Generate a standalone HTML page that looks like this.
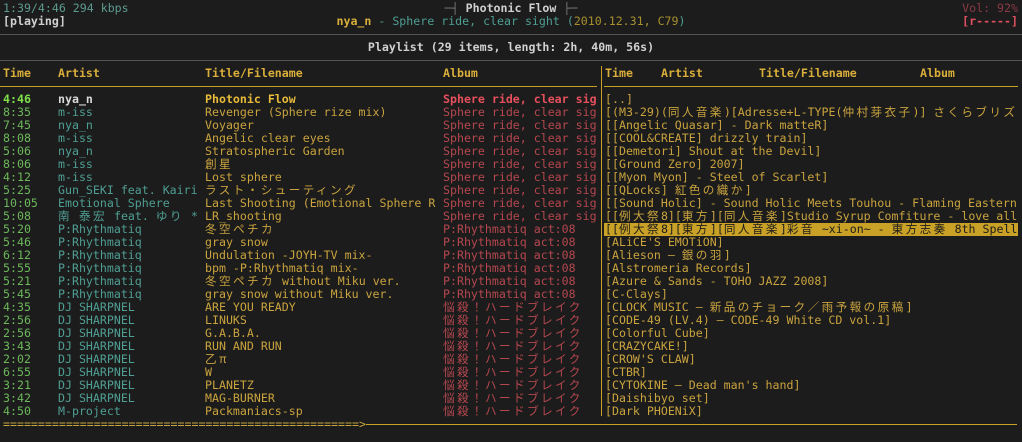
<!DOCTYPE html>
<html><head><meta charset="utf-8">
<style>
html,body{margin:0;padding:0;background:#1c1c1c;width:1022px;height:442px;overflow:hidden}
body{position:relative;font-family:"DejaVu Sans Mono","Liberation Mono","Noto Sans CJK JP",monospace;font-size:11.6px;line-height:13px}
.r{position:absolute;left:0;width:1022px;height:13px}
.c{position:absolute;top:0;white-space:pre;overflow:hidden;height:13px}
.b{font-weight:bold}
i{font-style:normal;letter-spacing:2.4px;font-family:"Noto Sans CJK JP",sans-serif}
.hl{position:absolute;background:#c9a126}
.h{color:#d9ae3a;font-weight:bold}
.line{position:absolute;height:1px}
.t1{left:3px;color:#6cb85a}
.t2{left:58px;width:145px;color:#4f9e93}
.t3{left:205px;width:236px;color:#c9a33e}
.t4{left:443px;width:155px;color:#b5474f}
.t5{left:605px;width:413px;color:#c9a33e}
</style></head><body>
<div class="r" style="top:2px"><span class="c" style="left:3px;color:#5d9a8e">1:39/4:46 294 kbps</span>
<span class="c" style="left:0;width:1022px;text-align:center;color:#d0d0d0"><span style="color:#777">─┤ </span><b>Photonic Flow</b><span style="color:#777"> ├─</span></span>
<span class="c" style="right:4px;color:#8a3a45">Vol: 92%</span></div>
<div class="r" style="top:15px"><span class="c b" style="left:3px;color:#d0d0d0">[playing]</span>
<span class="c" style="left:0;width:1022px;text-align:center;color:#4f9e93"><b style="color:#d9ae3a">nya_n</b> - Sphere ride, clear sight (<span style="color:#a8902e">2010.12.31, C79</span>)</span>
<span class="c b" style="right:4px;color:#e05060">[r-----]</span></div>
<div class="line" style="top:34px;left:0;width:1022px;background:#555"></div>
<div class="r" style="top:41px"><span class="c b" style="left:0;width:1022px;text-align:center;color:#d0d0d0">Playlist (29 items, length: 2h, 40m, 56s)</span></div>
<div class="line" style="top:60px;left:0;width:1022px;background:#555"></div>
<div class="r" style="top:67px"><span class="c h" style="left:3px">Time</span><span class="c h" style="left:58px">Artist</span><span class="c h" style="left:205px">Title/Filename</span><span class="c h" style="left:443px">Album</span>
<span class="c h" style="left:605px">Time</span><span class="c h" style="left:661px">Artist</span><span class="c h" style="left:759px">Title/Filename</span><span class="c h" style="left:920px">Album</span></div>
<div class="line" style="top:86px;left:0;width:597px;background:#c9a126"></div>
<div class="line" style="top:86px;left:604px;width:414px;background:#c9a126"></div>
<div class="line" style="top:66px;left:601px;width:1px;height:350px;background:#c9a126"></div>
<div class="hl" style="left:604px;top:223px;width:414px;height:13px"></div>

<div class="r" style="top:93px"><span class="c t1 b" style="color:#7fe04a">4:46</span><span class="c t2 b" style="color:#d8d8d8">nya_n</span><span class="c t3 b" style="color:#e8bb3a">Photonic Flow</span><span class="c t4 b" style="color:#e5505c">Sphere ride, clear sig</span><span class="c t5">[..]</span></div>
<div class="r" style="top:106px"><span class="c t1">8:35</span><span class="c t2">m-iss</span><span class="c t3">Revenger (Sphere rize mix)</span><span class="c t4">Sphere ride, clear sig</span><span class="c t5">[(M3-29)(<i>同人音楽</i>)[Adresse+L-TYPE(<i>仲村芽衣子</i>)] <i>さくらブリズ</i></span></div>
<div class="r" style="top:119px"><span class="c t1">7:45</span><span class="c t2">nya_n</span><span class="c t3">Voyager</span><span class="c t4">Sphere ride, clear sig</span><span class="c t5">[[Angelic Quasar] - Dark matteR]</span></div>
<div class="r" style="top:132px"><span class="c t1">8:08</span><span class="c t2">m-iss</span><span class="c t3">Angelic clear eyes</span><span class="c t4">Sphere ride, clear sig</span><span class="c t5">[[COOL&amp;CREATE] drizzly train]</span></div>
<div class="r" style="top:145px"><span class="c t1">5:06</span><span class="c t2">nya_n</span><span class="c t3">Stratospheric Garden</span><span class="c t4">Sphere ride, clear sig</span><span class="c t5">[[Demetori] Shout at the Devil]</span></div>
<div class="r" style="top:158px"><span class="c t1">8:06</span><span class="c t2">m-iss</span><span class="c t3"><i>創星</i></span><span class="c t4">Sphere ride, clear sig</span><span class="c t5">[[Ground Zero] 2007]</span></div>
<div class="r" style="top:171px"><span class="c t1">4:12</span><span class="c t2">m-iss</span><span class="c t3">Lost sphere</span><span class="c t4">Sphere ride, clear sig</span><span class="c t5">[[Myon Myon] - Steel of Scarlet]</span></div>
<div class="r" style="top:184px"><span class="c t1">5:25</span><span class="c t2">Gun_SEKI feat. Kairi</span><span class="c t3"><i>ラスト・シューティング</i></span><span class="c t4">Sphere ride, clear sig</span><span class="c t5">[[QLocks] <i>紅色の織か</i>]</span></div>
<div class="r" style="top:197px"><span class="c t1">10:05</span><span class="c t2">Emotional Sphere</span><span class="c t3">Last Shooting (Emotional Sphere R</span><span class="c t4">Sphere ride, clear sig</span><span class="c t5">[[Sound Holic] - Sound Holic Meets Touhou - Flaming Eastern</span></div>
<div class="r" style="top:210px"><span class="c t1">5:08</span><span class="c t2"><i>南</i> <i>泰宏</i> feat. <i>ゆり</i> *</span><span class="c t3">LR_shooting</span><span class="c t4">Sphere ride, clear sig</span><span class="c t5">[[<i>例大祭</i>8][<i>東方</i>][<i>同人音楽</i>]Studio Syrup Comfiture - love all</span></div>
<div class="r" style="top:223px"><span class="c t1">5:20</span><span class="c t2">P:Rhythmatiq</span><span class="c t3"><i>冬空ペチカ</i></span><span class="c t4">P:Rhythmatiq act:08</span><span class="c t5" style="color:#1c1c1c">[[<i>例大祭</i>8][<i>東方</i>][<i>同人音楽</i>]<i>彩音</i> ~xi-on~ - <i>東方志奏</i> 8th Spell</span></div>
<div class="r" style="top:236px"><span class="c t1">5:46</span><span class="c t2">P:Rhythmatiq</span><span class="c t3">gray snow</span><span class="c t4">P:Rhythmatiq act:08</span><span class="c t5">[ALiCE'S EMOTiON]</span></div>
<div class="r" style="top:249px"><span class="c t1">6:12</span><span class="c t2">P:Rhythmatiq</span><span class="c t3">Undulation -JOYH-TV mix-</span><span class="c t4">P:Rhythmatiq act:08</span><span class="c t5">[Alieson — <i>銀の羽</i>]</span></div>
<div class="r" style="top:262px"><span class="c t1">5:55</span><span class="c t2">P:Rhythmatiq</span><span class="c t3">bpm -P:Rhythmatiq mix-</span><span class="c t4">P:Rhythmatiq act:08</span><span class="c t5">[Alstromeria Records]</span></div>
<div class="r" style="top:275px"><span class="c t1">5:21</span><span class="c t2">P:Rhythmatiq</span><span class="c t3"><i>冬空ペチカ</i> without Miku ver.</span><span class="c t4">P:Rhythmatiq act:08</span><span class="c t5">[Azure &amp; Sands - TOHO JAZZ 2008]</span></div>
<div class="r" style="top:288px"><span class="c t1">5:45</span><span class="c t2">P:Rhythmatiq</span><span class="c t3">gray snow without Miku ver.</span><span class="c t4">P:Rhythmatiq act:08</span><span class="c t5">[C-Clays]</span></div>
<div class="r" style="top:301px"><span class="c t1">4:35</span><span class="c t2">DJ SHARPNEL</span><span class="c t3">ARE YOU READY</span><span class="c t4"><i>悩殺！ハードブレイク</i></span><span class="c t5">[CLOCK MUSIC — <i>新品のチョーク／雨予報の原稿</i>]</span></div>
<div class="r" style="top:314px"><span class="c t1">2:56</span><span class="c t2">DJ SHARPNEL</span><span class="c t3">LINUKS</span><span class="c t4"><i>悩殺！ハードブレイク</i></span><span class="c t5">[CODE-49 (LV.4) — CODE-49 White CD vol.1]</span></div>
<div class="r" style="top:327px"><span class="c t1">2:56</span><span class="c t2">DJ SHARPNEL</span><span class="c t3">G.A.B.A.</span><span class="c t4"><i>悩殺！ハードブレイク</i></span><span class="c t5">[Colorful Cube]</span></div>
<div class="r" style="top:340px"><span class="c t1">3:43</span><span class="c t2">DJ SHARPNEL</span><span class="c t3">RUN AND RUN</span><span class="c t4"><i>悩殺！ハードブレイク</i></span><span class="c t5">[CRAZYCAKE!]</span></div>
<div class="r" style="top:353px"><span class="c t1">2:02</span><span class="c t2">DJ SHARPNEL</span><span class="c t3"><i>乙π</i></span><span class="c t4"><i>悩殺！ハードブレイク</i></span><span class="c t5">[CROW'S CLAW]</span></div>
<div class="r" style="top:366px"><span class="c t1">6:55</span><span class="c t2">DJ SHARPNEL</span><span class="c t3">W</span><span class="c t4"><i>悩殺！ハードブレイク</i></span><span class="c t5">[CTBR]</span></div>
<div class="r" style="top:379px"><span class="c t1">3:21</span><span class="c t2">DJ SHARPNEL</span><span class="c t3">PLANETZ</span><span class="c t4"><i>悩殺！ハードブレイク</i></span><span class="c t5">[CYTOKINE — Dead man's hand]</span></div>
<div class="r" style="top:392px"><span class="c t1">3:42</span><span class="c t2">DJ SHARPNEL</span><span class="c t3">MAG-BURNER</span><span class="c t4"><i>悩殺！ハードブレイク</i></span><span class="c t5">[Daishibyo set]</span></div>
<div class="r" style="top:405px"><span class="c t1">4:50</span><span class="c t2">M-project</span><span class="c t3">Packmaniacs-sp</span><span class="c t4"><i>悩殺！ハードブレイク</i></span><span class="c t5">[Dark PHOENiX]</span></div>

<div class="r" style="top:418px"><span class="c" style="left:3px;color:#c9a33e">===================================================&gt;</span></div>
<div class="line" style="top:424px;left:366px;width:651px;background:#c9a126"></div>
</body></html>
